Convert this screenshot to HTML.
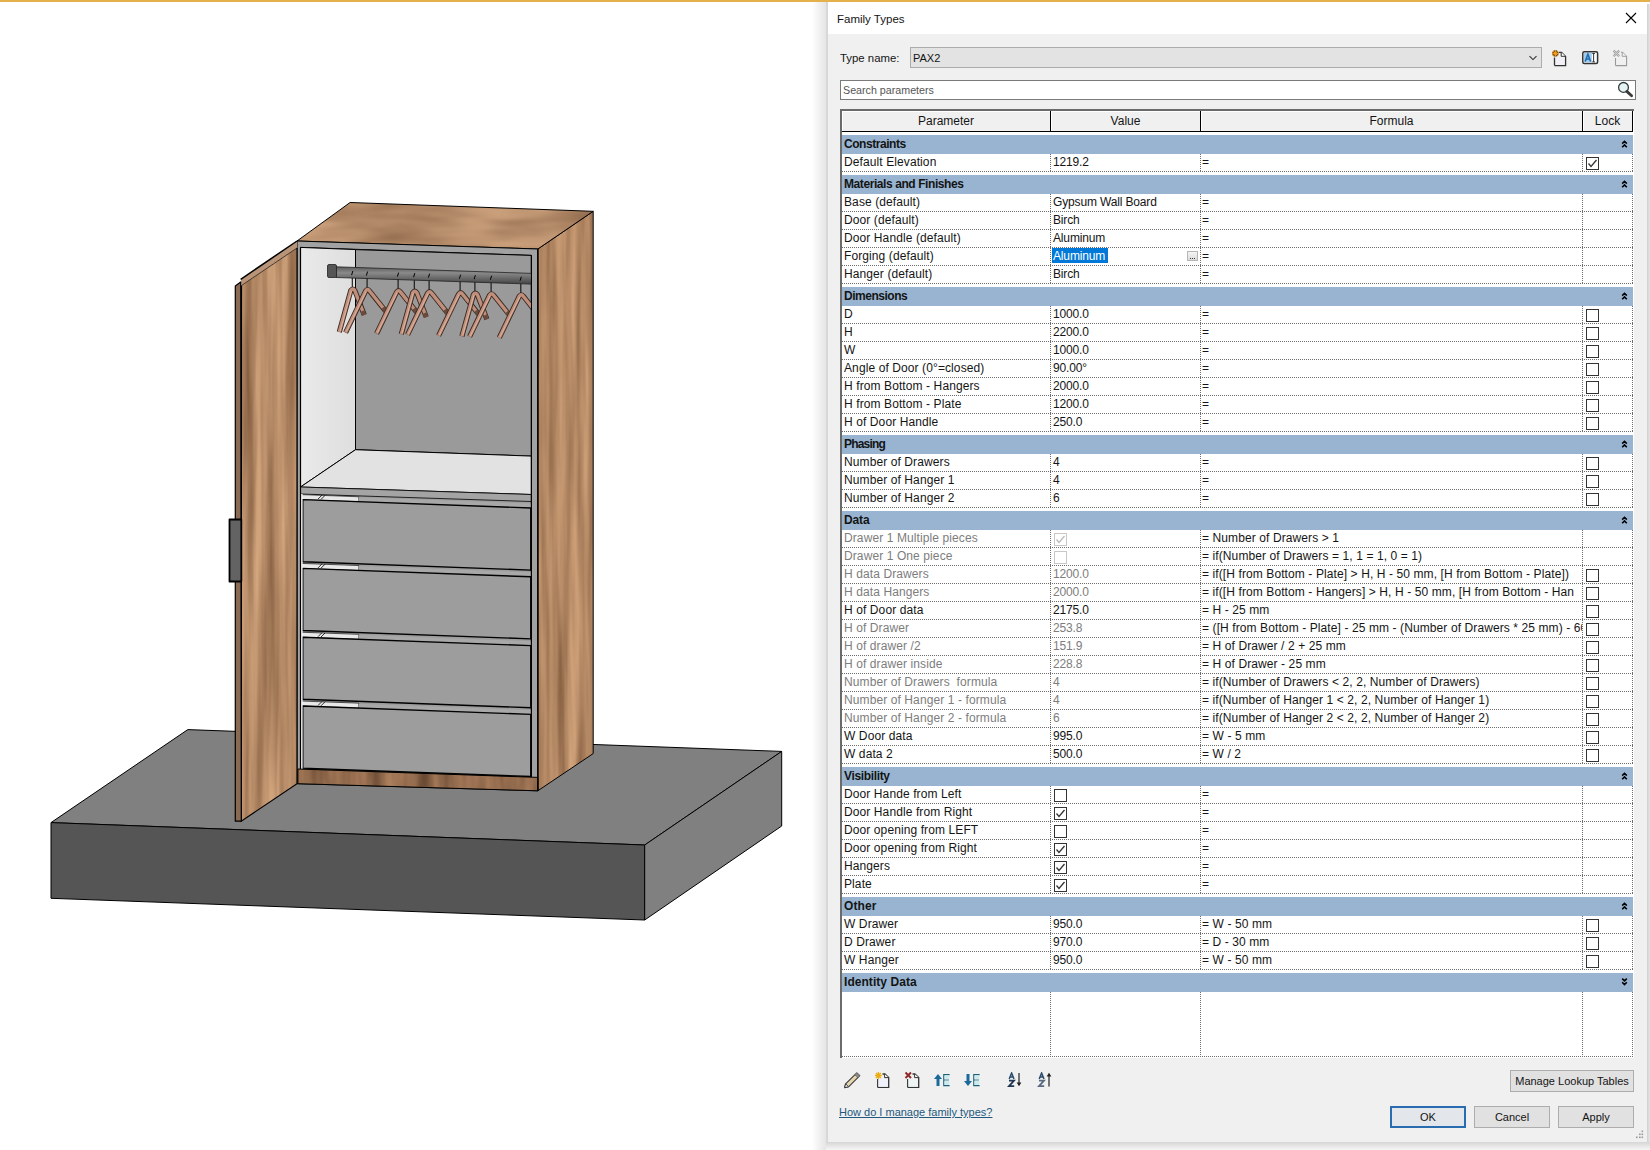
<!DOCTYPE html>
<html><head><meta charset="utf-8">
<style>
html,body{margin:0;padding:0;}
body{width:1650px;height:1150px;overflow:hidden;position:relative;background:#fff;font-family:"Liberation Sans",sans-serif;font-size:12px;color:#141414;}
.abs{position:absolute;}
#topline{position:absolute;left:0;top:0;width:1650px;height:2px;background:#e3b04b;}
#scene{position:absolute;left:0;top:0;}
#dlg{position:absolute;left:827px;top:2px;width:820px;height:1140px;background:#f0f0f0;border-left:1px solid #d6d6d6;box-sizing:border-box;}
#dlgshadow{position:absolute;left:1647px;top:4px;width:3px;height:1146px;background:linear-gradient(90deg,#cfcfcf,#e6e6e6);}
#dlgshadowb{position:absolute;left:826px;top:1142px;width:824px;height:8px;background:linear-gradient(180deg,#d6d6d6,#f6f6f6);}
#title{position:absolute;left:828px;top:2px;width:819px;height:32px;background:#fff;}
.t{position:absolute;white-space:nowrap;line-height:14px;}
.combo{position:absolute;left:910px;top:47px;width:632px;height:21px;box-sizing:border-box;background:#e3e3e3;border:1px solid #acacac;}
.search{position:absolute;left:840px;top:80px;width:796px;height:20px;box-sizing:border-box;background:#fff;border:1px solid #7a7a7a;}
#gridframe{position:absolute;left:840px;top:109px;width:794px;height:949px;background:#fff;border-top:2px solid #6b6b6b;border-left:2px solid #6b6b6b;box-sizing:border-box;}
.hdr{position:absolute;top:111px;height:21px;box-sizing:border-box;background:#f0f0f0;border-bottom:1px solid #000;border-right:1px solid #000;box-shadow:inset 1px 1px 0 #fff;text-align:center;line-height:21px;font-size:12px;}
.band{position:absolute;left:842px;width:791px;height:19px;background:#98b4d1;font-weight:bold;line-height:18px;padding-left:2px;box-sizing:border-box;}
.band b{font-weight:bold;}
.chev{position:absolute;left:779px;top:4px;}
.row{position:absolute;left:842px;width:791px;height:18px;}
.row .c1,.row .c2,.row .c3,.row .c4{position:absolute;top:0;height:17px;line-height:16px;white-space:nowrap;overflow:hidden;}
.row::after{content:"";position:absolute;left:0;top:17px;width:791px;height:1px;background:repeating-linear-gradient(90deg,#6c6c6c 0 1px,transparent 1px 2px);}
.row .c1{left:0;width:208px;padding-left:2px;box-sizing:border-box;letter-spacing:0.1px;}
.row .c2{left:208px;width:150px;padding-left:3px;box-sizing:border-box;letter-spacing:-0.15px;}
.row .c3{left:358px;width:382px;padding-left:2px;box-sizing:border-box;letter-spacing:0.1px;}
.row .c4{left:740px;width:50px;}
.row i{position:absolute;top:0;width:1px;height:17px;background:repeating-linear-gradient(180deg,#6c6c6c 0 1px,transparent 1px 2px);}
.row .v1{left:208px;}.row .v2{left:358px;}.row .v3{left:740px;}.row .v4{left:790px;}
.row.empty i{height:calc(100% - 1px);}
.row.empty::after{top:auto;bottom:0;}
.gray .c1,.gray .c2{color:#7d7d7d;}
.cb{position:absolute;left:4px;top:3px;width:13px;height:13px;}
.cb.lk{left:4px;}
.sel{position:absolute;left:2px;top:0px;height:15px;line-height:16px;background:#0078d7;color:#fff;padding:0 3px 0 1px;}
.dots3{position:absolute;left:137px;top:3px;width:11px;height:10px;box-sizing:border-box;border:1px solid #b5b5b5;background:linear-gradient(#f4f4f4,#dcdcdc);}
.dots3::after{content:"";position:absolute;left:2px;top:6px;width:6px;height:1px;background:repeating-linear-gradient(90deg,#333 0 1px,transparent 1px 2px);}
.btn{position:absolute;box-sizing:border-box;background:#e1e1e1;border:1px solid #adadad;text-align:center;font-size:11px;}
</style></head><body>
<div id="topline"></div>
<svg id="scene" width="826" height="1150" viewBox="0 0 826 1150"><defs><clipPath id="intClip"><polygon points="300.5,247.4 531,255.4 531,777 300.5,769"/></clipPath><filter id="fR" x="0%" y="0%" width="100%" height="100%" color-interpolation-filters="sRGB"><feTurbulence type="fractalNoise" baseFrequency="0.09 0.004" numOctaves="3" seed="5" result="n"/><feColorMatrix in="n" type="matrix" values="0.471 0 0 0 0.463  0.424 0 0 0 0.318  0.361 0 0 0 0.208  0 0 0 0 1" result="c"/><feComposite in="c" in2="SourceAlpha" operator="in"/></filter><filter id="fD" x="0%" y="0%" width="100%" height="100%" color-interpolation-filters="sRGB"><feTurbulence type="fractalNoise" baseFrequency="0.09 0.004" numOctaves="3" seed="9" result="n"/><feColorMatrix in="n" type="matrix" values="0.471 0 0 0 0.471  0.431 0 0 0 0.324  0.369 0 0 0 0.214  0 0 0 0 1" result="c"/><feComposite in="c" in2="SourceAlpha" operator="in"/></filter><filter id="fT" x="0%" y="0%" width="100%" height="100%" color-interpolation-filters="sRGB"><feTurbulence type="fractalNoise" baseFrequency="0.008 0.04" numOctaves="3" seed="13" result="n"/><feColorMatrix in="n" type="matrix" values="0.471 0 0 0 0.463  0.431 0 0 0 0.324  0.376 0 0 0 0.220  0 0 0 0 1" result="c"/><feComposite in="c" in2="SourceAlpha" operator="in"/></filter><filter id="fP" x="0%" y="0%" width="100%" height="100%" color-interpolation-filters="sRGB"><feTurbulence type="fractalNoise" baseFrequency="0.06 0.01" numOctaves="3" seed="21" result="n"/><feColorMatrix in="n" type="matrix" values="0.431 0 0 0 0.363  0.353 0 0 0 0.245  0.275 0 0 0 0.167  0 0 0 0 1" result="c"/><feComposite in="c" in2="SourceAlpha" operator="in"/></filter><linearGradient id="woodR" gradientUnits="userSpaceOnUse" x1="537" y1="0" x2="594" y2="0"><stop offset="0.000" stop-color="rgb(165,121,83)"/><stop offset="0.038" stop-color="rgb(193,145,103)"/><stop offset="0.077" stop-color="rgb(190,142,101)"/><stop offset="0.115" stop-color="rgb(170,125,87)"/><stop offset="0.154" stop-color="rgb(179,133,93)"/><stop offset="0.192" stop-color="rgb(177,132,92)"/><stop offset="0.231" stop-color="rgb(186,139,98)"/><stop offset="0.269" stop-color="rgb(191,143,102)"/><stop offset="0.308" stop-color="rgb(163,120,82)"/><stop offset="0.346" stop-color="rgb(161,117,80)"/><stop offset="0.385" stop-color="rgb(193,145,103)"/><stop offset="0.423" stop-color="rgb(177,131,92)"/><stop offset="0.462" stop-color="rgb(190,142,101)"/><stop offset="0.500" stop-color="rgb(160,117,80)"/><stop offset="0.538" stop-color="rgb(177,132,92)"/><stop offset="0.577" stop-color="rgb(188,141,100)"/><stop offset="0.615" stop-color="rgb(169,124,86)"/><stop offset="0.654" stop-color="rgb(197,149,106)"/><stop offset="0.692" stop-color="rgb(196,147,105)"/><stop offset="0.731" stop-color="rgb(161,118,80)"/><stop offset="0.769" stop-color="rgb(161,117,80)"/><stop offset="0.808" stop-color="rgb(181,135,95)"/><stop offset="0.846" stop-color="rgb(197,148,106)"/><stop offset="0.885" stop-color="rgb(175,129,90)"/><stop offset="0.923" stop-color="rgb(168,124,86)"/><stop offset="0.962" stop-color="rgb(176,131,91)"/><stop offset="1.000" stop-color="rgb(161,117,80)"/></linearGradient><linearGradient id="woodD" gradientUnits="userSpaceOnUse" x1="241" y1="0" x2="297" y2="0"><stop offset="0.000" stop-color="rgb(204,153,110)"/><stop offset="0.038" stop-color="rgb(203,153,110)"/><stop offset="0.077" stop-color="rgb(168,122,85)"/><stop offset="0.115" stop-color="rgb(169,123,86)"/><stop offset="0.154" stop-color="rgb(199,149,107)"/><stop offset="0.192" stop-color="rgb(195,146,104)"/><stop offset="0.231" stop-color="rgb(192,143,102)"/><stop offset="0.269" stop-color="rgb(178,131,92)"/><stop offset="0.308" stop-color="rgb(190,141,100)"/><stop offset="0.346" stop-color="rgb(190,141,100)"/><stop offset="0.385" stop-color="rgb(189,140,100)"/><stop offset="0.423" stop-color="rgb(172,126,88)"/><stop offset="0.462" stop-color="rgb(183,135,96)"/><stop offset="0.500" stop-color="rgb(181,134,95)"/><stop offset="0.538" stop-color="rgb(194,145,104)"/><stop offset="0.577" stop-color="rgb(205,154,111)"/><stop offset="0.615" stop-color="rgb(203,153,110)"/><stop offset="0.654" stop-color="rgb(187,139,99)"/><stop offset="0.692" stop-color="rgb(183,136,96)"/><stop offset="0.731" stop-color="rgb(176,130,91)"/><stop offset="0.769" stop-color="rgb(167,122,85)"/><stop offset="0.808" stop-color="rgb(167,121,84)"/><stop offset="0.846" stop-color="rgb(184,136,97)"/><stop offset="0.885" stop-color="rgb(178,131,92)"/><stop offset="0.923" stop-color="rgb(181,133,94)"/><stop offset="0.962" stop-color="rgb(201,151,108)"/><stop offset="1.000" stop-color="rgb(187,138,98)"/></linearGradient><linearGradient id="woodP" gradientUnits="userSpaceOnUse" x1="297" y1="0" x2="538" y2="0"><stop offset="0.000" stop-color="rgb(142,105,74)"/><stop offset="0.038" stop-color="rgb(151,113,80)"/><stop offset="0.077" stop-color="rgb(146,108,77)"/><stop offset="0.115" stop-color="rgb(152,114,82)"/><stop offset="0.154" stop-color="rgb(153,114,82)"/><stop offset="0.192" stop-color="rgb(137,101,71)"/><stop offset="0.231" stop-color="rgb(136,100,70)"/><stop offset="0.269" stop-color="rgb(159,120,86)"/><stop offset="0.308" stop-color="rgb(143,106,75)"/><stop offset="0.346" stop-color="rgb(142,105,74)"/><stop offset="0.385" stop-color="rgb(163,123,89)"/><stop offset="0.423" stop-color="rgb(149,111,79)"/><stop offset="0.462" stop-color="rgb(159,120,86)"/><stop offset="0.500" stop-color="rgb(149,111,79)"/><stop offset="0.538" stop-color="rgb(153,115,82)"/><stop offset="0.577" stop-color="rgb(140,103,73)"/><stop offset="0.615" stop-color="rgb(153,115,82)"/><stop offset="0.654" stop-color="rgb(160,120,87)"/><stop offset="0.692" stop-color="rgb(150,112,80)"/><stop offset="0.731" stop-color="rgb(156,117,84)"/><stop offset="0.769" stop-color="rgb(154,116,83)"/><stop offset="0.808" stop-color="rgb(137,101,71)"/><stop offset="0.846" stop-color="rgb(157,118,85)"/><stop offset="0.885" stop-color="rgb(152,114,81)"/><stop offset="0.923" stop-color="rgb(144,107,76)"/><stop offset="0.962" stop-color="rgb(136,100,70)"/><stop offset="1.000" stop-color="rgb(160,120,87)"/></linearGradient><linearGradient id="topG" x1="0" y1="0" x2="1" y2="0.3"><stop offset="0" stop-color="#b4845e"/><stop offset="0.3" stop-color="#c09470"/><stop offset="0.55" stop-color="#a97b56"/><stop offset="0.8" stop-color="#bb8e68"/><stop offset="1" stop-color="#ae8360"/></linearGradient><linearGradient id="leftIn" x1="0" y1="0" x2="1" y2="0"><stop offset="0" stop-color="#eaeaea"/><stop offset="1" stop-color="#dedede"/></linearGradient><linearGradient id="rodG" x1="0" y1="0" x2="0" y2="1"><stop offset="0" stop-color="#5a5a5a"/><stop offset="0.35" stop-color="#8a8a8a"/><stop offset="1" stop-color="#444"/></linearGradient></defs><polygon points="51,822.6 187.8,729.6 781.7,751.4 644.7,845" fill="#808080" stroke="#000" stroke-width="1" stroke-linejoin="round" />
<polygon points="51,822.6 644.7,845 644.7,920 51,898.3" fill="#555555" stroke="#000" stroke-width="1" stroke-linejoin="round" />
<polygon points="644.7,845 781.7,751.4 781.7,826 644.7,920" fill="#808080" stroke="#000" stroke-width="1" stroke-linejoin="round" />
<polygon points="537.8,249 593.2,211.3 593.2,753.6 537.8,790.8" fill="#000" stroke="none" stroke-width="1" stroke-linejoin="round" filter="url(#fR)"/>
<polygon points="537.8,249 593.2,211.3 593.2,753.6 537.8,790.8" fill="none" stroke="#000" stroke-width="1" stroke-linejoin="round" />
<polygon points="297,241 350.1,202.5 593.2,211.3 537.8,249" fill="#000" stroke="none" stroke-width="1" stroke-linejoin="round" filter="url(#fT)"/>
<polygon points="297,241 350.1,202.5 593.2,211.3 537.8,249" fill="none" stroke="#000" stroke-width="1" stroke-linejoin="round" />
<polygon points="297,241 537.8,249 537.8,790.8 297,783.7" fill="#a2a2a2" stroke="#000" stroke-width="1" stroke-linejoin="round" />
<polygon points="300.5,247.4 531.4,255.4 531.4,777 300.5,769" fill="#9c9c9c" stroke="#000" stroke-width="1" stroke-linejoin="round" />
<polygon points="300.5,247.4 355.5,249.6 355.5,449.7 300.5,487" fill="url(#leftIn)" stroke="#000" stroke-width="1" stroke-linejoin="round" />
<polygon points="355.5,249.6 531.4,255.4 531.4,456.1 355.5,449.7" fill="#9a9a9a" stroke="#000" stroke-width="1" stroke-linejoin="round" />
<polygon points="300.5,487 355.5,449.7 531.4,456.1 531.4,494.5" fill="#e2e2e2" stroke="#000" stroke-width="1" stroke-linejoin="round" />
<polygon points="300.5,487 531.4,494.5 531.4,501.5 300.5,494" fill="#a4a4a4" stroke="#000" stroke-width="0.8" stroke-linejoin="round" />
<polygon points="300.8,494.6 358.8,496.7663157894737 358.8,501.7663157894737 300.8,499.6" fill="#e8e8e8" stroke="#000" stroke-width="0.6" stroke-linejoin="round" />
<polygon points="358.8,497.2663157894737 531,503.5736842105263 531,508.0736842105263 358.8,501.7663157894737" fill="#a8a8a8" stroke="none" stroke-width="1" stroke-linejoin="round" />
<polygon points="302.8,499.6 530.8,508.0 530.8,570.1 302.8,561.7" fill="#9d9d9d" stroke="#000" stroke-width="1.4" stroke-linejoin="round" />
<path d="M318 499.1 l4 -4 M321 499.40000000000003 l4 -4" stroke="#000" stroke-width="0.8"/>
<polygon points="300.8,563.4 358.8,565.5663157894736 358.8,570.5663157894736 300.8,568.4" fill="#e8e8e8" stroke="#000" stroke-width="0.6" stroke-linejoin="round" />
<polygon points="358.8,566.0663157894736 531,572.3736842105262 531,576.8736842105262 358.8,570.5663157894736" fill="#a8a8a8" stroke="none" stroke-width="1" stroke-linejoin="round" />
<polygon points="302.8,568.4 530.8,576.8 530.8,638.9 302.8,630.5" fill="#9d9d9d" stroke="#000" stroke-width="1.4" stroke-linejoin="round" />
<path d="M318 567.9 l4 -4 M321 568.1999999999999 l4 -4" stroke="#000" stroke-width="0.8"/>
<polygon points="300.8,632.2 358.8,634.3663157894737 358.8,639.3663157894737 300.8,637.2" fill="#e8e8e8" stroke="#000" stroke-width="0.6" stroke-linejoin="round" />
<polygon points="358.8,634.8663157894737 531,641.1736842105263 531,645.6736842105263 358.8,639.3663157894737" fill="#a8a8a8" stroke="none" stroke-width="1" stroke-linejoin="round" />
<polygon points="302.8,637.2 530.8,645.6 530.8,707.7 302.8,699.3000000000001" fill="#9d9d9d" stroke="#000" stroke-width="1.4" stroke-linejoin="round" />
<path d="M318 636.7 l4 -4 M321 637.0 l4 -4" stroke="#000" stroke-width="0.8"/>
<polygon points="300.8,701.0 358.8,703.1663157894736 358.8,708.1663157894736 300.8,706.0" fill="#e8e8e8" stroke="#000" stroke-width="0.6" stroke-linejoin="round" />
<polygon points="358.8,703.6663157894736 531,709.9736842105262 531,714.4736842105262 358.8,708.1663157894736" fill="#a8a8a8" stroke="none" stroke-width="1" stroke-linejoin="round" />
<polygon points="302.8,706.0 530.8,714.4 530.8,776.5 302.8,768.1" fill="#9d9d9d" stroke="#000" stroke-width="1.4" stroke-linejoin="round" />
<path d="M318 705.5 l4 -4 M321 705.8 l4 -4" stroke="#000" stroke-width="0.8"/>
<rect x="300.8" y="494" width="1.8" height="275" fill="#f2f2f2"/>
<polygon points="297.9,769 537.8,777.4 537.8,790.8 297.9,783.7" fill="#000" stroke="none" stroke-width="1" stroke-linejoin="round" filter="url(#fP)"/>
<polygon points="297.9,769 537.8,777.4 537.8,790.8 297.9,783.7" fill="none" stroke="#000" stroke-width="1" stroke-linejoin="round" />
<line x1="531.4" y1="255.4" x2="531.4" y2="777" stroke="#000" stroke-width="1.2"/>
<line x1="300.5" y1="247.4" x2="300.5" y2="769" stroke="#000" stroke-width="1.2"/>
<g clip-path="url(#intClip)">
<polygon points="336,266.8 531.4,273.4 531.4,284.09999999999997 336,277.5" fill="url(#rodG)" stroke="#222" stroke-width="0.8"/>
<rect x="327.5" y="264.5" width="9" height="13" rx="1.5" fill="#555" stroke="#222" stroke-width="0.8"/>
<path d="M352.8 271.0505629477994 l-1.2 4" stroke="#000" stroke-width="1"/>
<path d="M352.3 278.0505629477994 L352.3 288.0505629477994" stroke="#111" stroke-width="1.1"/>
<path d="M339.3 332.0505629477994 L350.8 290.5505629477994 Q352.8 287.5505629477994 354.8 290.5505629477994 L364.3 315.0505629477994" fill="none" stroke="#3b2a22" stroke-width="5.2" stroke-linejoin="round" stroke-linecap="butt"/>
<path d="M339.3 332.0505629477994 L350.8 290.5505629477994 Q352.8 287.5505629477994 354.8 290.5505629477994 L364.3 315.0505629477994" fill="none" stroke="#bf8f7c" stroke-width="3.4" stroke-linejoin="round" stroke-linecap="butt"/>
<path d="M340.1 331.0505629477994 L351.3 291.0505629477994" fill="none" stroke="#e2b8a4" stroke-width="0.9"/>
<path d="M362.5 311.0005629477994 L364.3 315.0505629477994" stroke="#6a4a3c" stroke-width="4"/>
<path d="M367.6 271.55046059365407 l-1.2 4" stroke="#000" stroke-width="1"/>
<path d="M367.1 278.55046059365407 L367.1 288.55046059365407" stroke="#111" stroke-width="1.1"/>
<path d="M345.6 332.55046059365407 L365.6 291.05046059365407 Q367.6 288.05046059365407 369.6 291.05046059365407 L385.6 311.05046059365407" fill="none" stroke="#3b2a22" stroke-width="5.2" stroke-linejoin="round" stroke-linecap="butt"/>
<path d="M345.6 332.55046059365407 L365.6 291.05046059365407 Q367.6 288.05046059365407 369.6 291.05046059365407 L385.6 311.05046059365407" fill="none" stroke="#bf8f7c" stroke-width="3.4" stroke-linejoin="round" stroke-linecap="butt"/>
<path d="M346.40000000000003 331.55046059365407 L366.1 291.55046059365407" fill="none" stroke="#e2b8a4" stroke-width="0.9"/>
<path d="M382.82500000000005 307.67546059365407 L385.6 311.05046059365407" stroke="#6a4a3c" stroke-width="4"/>
<path d="M398.6 272.59754350051173 l-1.2 4" stroke="#000" stroke-width="1"/>
<path d="M398.1 279.59754350051173 L398.1 289.59754350051173" stroke="#111" stroke-width="1.1"/>
<path d="M376.6 333.59754350051173 L396.6 292.09754350051173 Q398.6 289.09754350051173 400.6 292.09754350051173 L416.6 312.09754350051173" fill="none" stroke="#3b2a22" stroke-width="5.2" stroke-linejoin="round" stroke-linecap="butt"/>
<path d="M376.6 333.59754350051173 L396.6 292.09754350051173 Q398.6 289.09754350051173 400.6 292.09754350051173 L416.6 312.09754350051173" fill="none" stroke="#bf8f7c" stroke-width="3.4" stroke-linejoin="round" stroke-linecap="butt"/>
<path d="M377.40000000000003 332.59754350051173 L397.1 292.59754350051173" fill="none" stroke="#e2b8a4" stroke-width="0.9"/>
<path d="M413.82500000000005 308.72254350051173 L416.6 312.09754350051173" stroke="#6a4a3c" stroke-width="4"/>
<path d="M414.8 273.14472876151484 l-1.2 4" stroke="#000" stroke-width="1"/>
<path d="M414.3 280.14472876151484 L414.3 290.14472876151484" stroke="#111" stroke-width="1.1"/>
<path d="M401.3 334.14472876151484 L412.8 292.64472876151484 Q414.8 289.64472876151484 416.8 292.64472876151484 L426.3 317.14472876151484" fill="none" stroke="#3b2a22" stroke-width="5.2" stroke-linejoin="round" stroke-linecap="butt"/>
<path d="M401.3 334.14472876151484 L412.8 292.64472876151484 Q414.8 289.64472876151484 416.8 292.64472876151484 L426.3 317.14472876151484" fill="none" stroke="#bf8f7c" stroke-width="3.4" stroke-linejoin="round" stroke-linecap="butt"/>
<path d="M402.1 333.14472876151484 L413.3 293.14472876151484" fill="none" stroke="#e2b8a4" stroke-width="0.9"/>
<path d="M424.5 313.09472876151483 L426.3 317.14472876151484" stroke="#6a4a3c" stroke-width="4"/>
<path d="M429.6 273.64462640736946 l-1.2 4" stroke="#000" stroke-width="1"/>
<path d="M429.1 280.64462640736946 L429.1 290.64462640736946" stroke="#111" stroke-width="1.1"/>
<path d="M407.6 334.64462640736946 L427.6 293.14462640736946 Q429.6 290.14462640736946 431.6 293.14462640736946 L447.6 313.14462640736946" fill="none" stroke="#3b2a22" stroke-width="5.2" stroke-linejoin="round" stroke-linecap="butt"/>
<path d="M407.6 334.64462640736946 L427.6 293.14462640736946 Q429.6 290.14462640736946 431.6 293.14462640736946 L447.6 313.14462640736946" fill="none" stroke="#bf8f7c" stroke-width="3.4" stroke-linejoin="round" stroke-linecap="butt"/>
<path d="M408.40000000000003 333.64462640736946 L428.1 293.64462640736946" fill="none" stroke="#e2b8a4" stroke-width="0.9"/>
<path d="M444.82500000000005 309.76962640736946 L447.6 313.14462640736946" stroke="#6a4a3c" stroke-width="4"/>
<path d="M460.6 274.6917093142272 l-1.2 4" stroke="#000" stroke-width="1"/>
<path d="M460.1 281.6917093142272 L460.1 291.6917093142272" stroke="#111" stroke-width="1.1"/>
<path d="M438.6 335.6917093142272 L458.6 294.1917093142272 Q460.6 291.1917093142272 462.6 294.1917093142272 L478.6 314.1917093142272" fill="none" stroke="#3b2a22" stroke-width="5.2" stroke-linejoin="round" stroke-linecap="butt"/>
<path d="M438.6 335.6917093142272 L458.6 294.1917093142272 Q460.6 291.1917093142272 462.6 294.1917093142272 L478.6 314.1917093142272" fill="none" stroke="#bf8f7c" stroke-width="3.4" stroke-linejoin="round" stroke-linecap="butt"/>
<path d="M439.40000000000003 334.6917093142272 L459.1 294.6917093142272" fill="none" stroke="#e2b8a4" stroke-width="0.9"/>
<path d="M475.82500000000005 310.8167093142272 L478.6 314.1917093142272" stroke="#6a4a3c" stroke-width="4"/>
<path d="M475.4 275.19160696008186 l-1.2 4" stroke="#000" stroke-width="1"/>
<path d="M474.9 282.19160696008186 L474.9 292.19160696008186" stroke="#111" stroke-width="1.1"/>
<path d="M461.9 336.19160696008186 L473.4 294.69160696008186 Q475.4 291.69160696008186 477.4 294.69160696008186 L486.9 319.19160696008186" fill="none" stroke="#3b2a22" stroke-width="5.2" stroke-linejoin="round" stroke-linecap="butt"/>
<path d="M461.9 336.19160696008186 L473.4 294.69160696008186 Q475.4 291.69160696008186 477.4 294.69160696008186 L486.9 319.19160696008186" fill="none" stroke="#bf8f7c" stroke-width="3.4" stroke-linejoin="round" stroke-linecap="butt"/>
<path d="M462.7 335.19160696008186 L473.9 295.19160696008186" fill="none" stroke="#e2b8a4" stroke-width="0.9"/>
<path d="M485.09999999999997 315.14160696008184 L486.9 319.19160696008186" stroke="#6a4a3c" stroke-width="4"/>
<path d="M491.6 275.7387922210849 l-1.2 4" stroke="#000" stroke-width="1"/>
<path d="M491.1 282.7387922210849 L491.1 292.7387922210849" stroke="#111" stroke-width="1.1"/>
<path d="M469.6 336.7387922210849 L489.6 295.2387922210849 Q491.6 292.2387922210849 493.6 295.2387922210849 L509.6 315.2387922210849" fill="none" stroke="#3b2a22" stroke-width="5.2" stroke-linejoin="round" stroke-linecap="butt"/>
<path d="M469.6 336.7387922210849 L489.6 295.2387922210849 Q491.6 292.2387922210849 493.6 295.2387922210849 L509.6 315.2387922210849" fill="none" stroke="#bf8f7c" stroke-width="3.4" stroke-linejoin="round" stroke-linecap="butt"/>
<path d="M470.40000000000003 335.7387922210849 L490.1 295.7387922210849" fill="none" stroke="#e2b8a4" stroke-width="0.9"/>
<path d="M506.82500000000005 311.8637922210849 L509.6 315.2387922210849" stroke="#6a4a3c" stroke-width="4"/>
<path d="M521.3 276.74196519959054 l-1.2 4" stroke="#000" stroke-width="1"/>
<path d="M520.8 283.74196519959054 L520.8 293.74196519959054" stroke="#111" stroke-width="1.1"/>
<path d="M499.29999999999995 337.74196519959054 L519.3 296.24196519959054 Q521.3 293.24196519959054 523.3 296.24196519959054 L539.3 316.24196519959054" fill="none" stroke="#3b2a22" stroke-width="5.2" stroke-linejoin="round" stroke-linecap="butt"/>
<path d="M499.29999999999995 337.74196519959054 L519.3 296.24196519959054 Q521.3 293.24196519959054 523.3 296.24196519959054 L539.3 316.24196519959054" fill="none" stroke="#bf8f7c" stroke-width="3.4" stroke-linejoin="round" stroke-linecap="butt"/>
<path d="M500.09999999999997 336.74196519959054 L519.8 296.74196519959054" fill="none" stroke="#e2b8a4" stroke-width="0.9"/>
<path d="M536.525 312.86696519959054 L539.3 316.24196519959054" stroke="#6a4a3c" stroke-width="4"/>
</g>
<line x1="537.8" y1="249" x2="537.8" y2="790.8" stroke="#000" stroke-width="1.2"/>
<polygon points="240.7,279.3 297,241 297,248 241.5,285.5" fill="#b89478" stroke="none" stroke-width="1" stroke-linejoin="round" />
<path d="M240.7 279.3 L297 241" stroke="#000" stroke-width="1.5"/>
<polygon points="241.5,285.5 297,248 297,783.7 241.3,821.2" fill="#000" stroke="none" stroke-width="1" stroke-linejoin="round" filter="url(#fD)"/>
<path d="M241.5 285.5 L297 248" stroke="#2a1a10" stroke-width="0.8"/>
<path d="M297 248 L297 783.7 L241.3 821.2 L241.5 285.5" fill="none" stroke="#000" stroke-width="1.2"/>
<polygon points="235.3,286 240.7,282 241.3,821.2 235.3,821.2" fill="#8a6a52" stroke="#000" stroke-width="1.2" stroke-linejoin="round" />
<polygon points="229.5,519.5 241.3,519.5 241.3,581.5 229.5,581.5" fill="#636363" stroke="#000" stroke-width="1.8" stroke-linejoin="round" /></svg>
<div id="dlgshadow"></div><div id="dlgshadowl" style="position:absolute;left:812px;top:2px;width:15px;height:1148px;background:linear-gradient(90deg,rgba(232,232,232,0),#e6e6e6 90%,#d2d2d2);"></div>
<div id="dlgshadowb"></div>
<div id="dlg"></div>
<div id="title"></div>
<div class="t" style="left:837px;top:12px;font-size:11.5px;">Family Types</div>
<svg class="abs" style="left:1624px;top:11px" width="14" height="14" viewBox="0 0 14 14"><path d="M2 2 L12 12 M12 2 L2 12" stroke="#000" stroke-width="1.1"/></svg>
<div class="t" style="left:840px;top:51px;font-size:11.4px;">Type name:</div>
<div class="combo"><span class="t" style="left:2px;top:3px;font-size:11px;">PAX2</span>
<svg class="abs" style="left:617px;top:7px" width="10" height="6" viewBox="0 0 10 6"><path d="M1.5 1.2 L5 4.6 L8.5 1.2" fill="none" stroke="#333" stroke-width="1.1"/></svg></div>
<div class="search"><span class="t" style="left:2px;top:2px;font-size:10.7px;color:#555;">Search parameters</span></div>

<!-- top icons -->
<svg class="abs" style="left:1550px;top:48px" width="20" height="20" viewBox="0 0 20 20">
<rect x="4.9" y="9.2" width="10.2" height="8" fill="#f2f0f6"/>
<path d="M4.5 17.6 V9.5 M4.5 17.6 H15.6 V8.5 L11.5 4.3 H9" fill="none" stroke="#333" stroke-width="1.3"/>
<path d="M11.2 4.3 V8.3 H15.4" fill="#fff" stroke="#333" stroke-width="1"/>
<g stroke="#7a4a10" stroke-width="2.2"><path d="M5.4 2.2 V8.6 M2.2 5.4 H8.6 M3.1 3.1 L7.7 7.7 M7.7 3.1 L3.1 7.7"/></g>
<g stroke="#f0a020" stroke-width="1"><path d="M5.4 2.2 V8.6 M2.2 5.4 H8.6 M3.1 3.1 L7.7 7.7 M7.7 3.1 L3.1 7.7"/></g>
</svg>
<svg class="abs" style="left:1581px;top:50px" width="18" height="15" viewBox="0 0 18 15">
<rect x="1.8" y="1.8" width="14.8" height="11.7" rx="1.5" fill="#fff" stroke="#333" stroke-width="1.5"/>
<rect x="3" y="3" width="7.8" height="9.2" fill="#9fcbef"/>
<path d="M4.2 11.5 L6.9 4.2 L9.6 11.5 M5.1 9 H8.7" fill="none" stroke="#1d6bab" stroke-width="1.5"/>
<path d="M12.6 3.5 V11.8 M11.3 3.5 H13.9 M11.3 11.8 H13.9" fill="none" stroke="#333" stroke-width="1"/>
</svg>
<svg class="abs" style="left:1611px;top:48px" width="20" height="20" viewBox="0 0 20 20">
<path d="M4.5 17.6 V10 M4.5 17.6 H15.6 V8.5 L11.5 4.3 H10" fill="none" stroke="#9a9a9a" stroke-width="1.1"/>
<path d="M11.2 4.3 V8.3 H15.4" fill="#f4f4f4" stroke="#9a9a9a" stroke-width="0.9"/>
<g stroke="#a0a0a0" stroke-width="2.2"><path d="M2.6 2.6 L8.2 8.2 M8.2 2.6 L2.6 8.2"/></g>
<g stroke="#e6e6e6" stroke-width="0.7"><path d="M2.6 2.6 L8.2 8.2 M8.2 2.6 L2.6 8.2"/></g>
</svg>
<svg class="abs" style="left:1615px;top:80px" width="20" height="19" viewBox="0 0 20 19">
<circle cx="8.5" cy="7.4" r="4.9" fill="#e6f3f3" stroke="#2f3b3b" stroke-width="1.3"/>
<path d="M11.8 11.4 L16.6 15.8" stroke="#3a3a3a" stroke-width="2.8" stroke-linecap="round"/>
</svg>
<!-- bottom toolbar -->
<svg class="abs" style="left:842px;top:1071px" width="20" height="19" viewBox="0 0 20 19">
<path d="M2.6 16.6 L3.6 12.8 L14.8 1.8 L17.8 4.6 L6.6 15.8 Z" fill="#e4d5ad" stroke="#3a3a3a" stroke-width="1.1" stroke-linejoin="round"/>
<path d="M2.6 16.6 L3.6 12.8 L6.6 15.8 Z" fill="#fff" stroke="#3a3a3a" stroke-width="1"/>
<path d="M13 3.6 L16 6.4" stroke="#3a3a3a" stroke-width="1"/>
<path d="M14.8 1.8 L17.8 4.6 L16 6.4 L13 3.6 Z" fill="#8a8a8a"/>
</svg>
<svg class="abs" style="left:874px;top:1071px" width="18" height="19" viewBox="0 0 18 19">
<path d="M3.7 16.4 V8 M3.7 16.4 H14.7 V6.5 L10.9 3 H8.5" fill="none" stroke="#333" stroke-width="1.3"/>
<path d="M10.6 3 V6.6 H14.6" fill="#fff" stroke="#333" stroke-width="1"/>
<rect x="4.4" y="8" width="9.6" height="7.8" fill="#eef0fa"/>
<g stroke="#ecac10" stroke-width="1.3"><path d="M4.4 1 V8 M1 4.5 H7.8 M2 2 L6.8 7 M6.8 2 L2 7"/></g>
</svg>
<svg class="abs" style="left:904px;top:1071px" width="18" height="19" viewBox="0 0 18 19">
<path d="M3.7 16.4 V8 M3.7 16.4 H14.7 V6.5 L10.9 3 H8.5" fill="none" stroke="#333" stroke-width="1.3"/>
<path d="M10.6 3 V6.6 H14.6" fill="#fff" stroke="#333" stroke-width="1"/>
<rect x="4.4" y="8" width="9.6" height="7.8" fill="#eef3f3"/>
<g stroke="#8e2a2a" stroke-width="2"><path d="M1.5 1.5 L7 7 M7 1.5 L1.5 7"/></g>
</svg>
<svg class="abs" style="left:932px;top:1072px" width="20" height="16" viewBox="0 0 20 16">
<path d="M6 2 L10 7 H7.5 V14 H4.5 V7 H2 Z" fill="#1a6a9a"/>
<path d="M17.6 2.6 H11.8 V13.6 H17.6 M11.8 8 H17" fill="none" stroke="#1e5f78" stroke-width="1.2"/>
<rect x="12.5" y="3.3" width="4.6" height="4" fill="#c9ecef"/><rect x="12.5" y="8.7" width="4.6" height="4.2" fill="#c9ecef"/>
</svg>
<svg class="abs" style="left:962px;top:1072px" width="20" height="16" viewBox="0 0 20 16">
<path d="M6 14 L10 9 H7.5 V2 H4.5 V9 H2 Z" fill="#1a6a9a"/>
<path d="M17.6 2.6 H11.8 V13.6 H17.6 M11.8 8 H17" fill="none" stroke="#1e5f78" stroke-width="1.2"/>
<rect x="12.5" y="3.3" width="4.6" height="4" fill="#c9ecef"/><rect x="12.5" y="8.7" width="4.6" height="4.2" fill="#c9ecef"/>
</svg>
<svg class="abs" style="left:1007px;top:1072px" width="18" height="16" viewBox="0 0 18 16">
<path d="M2.2 7 L4.6 1 L7 7 M3.1 5 H6.1" fill="none" stroke="#2a4a6a" stroke-width="1.5"/>
<path d="M2 8.6 H7 L2 14.2 H7.2" fill="none" stroke="#1f3550" stroke-width="1.8"/>
<path d="M12 1 V13" stroke="#222" stroke-width="1.2"/><path d="M9.6 10.5 L12 14.3 L14.4 10.5 Z" fill="#222"/>
</svg>
<svg class="abs" style="left:1037px;top:1072px" width="18" height="16" viewBox="0 0 18 16">
<path d="M2.2 7 L4.6 1 L7 7 M3.1 5 H6.1" fill="none" stroke="#2a4a6a" stroke-width="1.5"/>
<path d="M2 8.6 H7 L2 14.2 H7.2" fill="none" stroke="#5a6a80" stroke-width="1.8"/>
<path d="M12 3 V14.5" stroke="#222" stroke-width="1.2"/><path d="M9.6 4.6 L12 0.8 L14.4 4.6 Z" fill="#222"/>
</svg>
<!-- resize grip -->
<svg class="abs" style="left:1634px;top:1129px" width="12" height="12" viewBox="0 0 12 12" fill="#9a9a9a">
<rect x="7.5" y="1.5" width="1.6" height="1.6"/><rect x="5" y="4.5" width="1.6" height="1.6"/><rect x="7.5" y="4.5" width="1.6" height="1.6"/>
<rect x="2" y="7.5" width="1.6" height="1.6"/><rect x="5" y="7.5" width="1.6" height="1.6"/><rect x="7.5" y="7.5" width="1.6" height="1.6"/>
</svg>
<div id="gridframe"></div>
<div class="hdr" style="left:842px;width:209px;">Parameter</div>
<div class="hdr" style="left:1051px;width:150px;">Value</div>
<div class="hdr" style="left:1201px;width:382px;">Formula</div>
<div class="hdr" style="left:1583px;width:50px;">Lock</div>
<div class="band" style="top:135px"><b style="letter-spacing:-0.45px">Constraints</b><svg width="7" height="10" viewBox="0 0 7 10" class="chev"><path d="M1.2 4.6 L3.5 2.3 L5.8 4.6 M1.2 8.2 L3.5 5.9 L5.8 8.2" fill="none" stroke="#000" stroke-width="1.6"/></svg></div>
<div class="row" style="top:154px"><div class="c1">Default Elevation</div><div class="c2">1219.2</div><div class="c3">=</div><div class="c4"><span class="cb lk"><svg width="13" height="13" viewBox="0 0 13 13" style="position:absolute;left:0;top:0"><rect x="0.5" y="0.5" width="12" height="12" fill="#fff" stroke="#333"/><path d="M2.5 6.5 L5 9.5 L10.5 3" fill="none" stroke="#333" stroke-width="1.3"/></svg></span></div><i class="v1"></i><i class="v2"></i><i class="v3"></i><i class="v4"></i></div>
<div class="band" style="top:175px"><b style="letter-spacing:-0.42px">Materials and Finishes</b><svg width="7" height="10" viewBox="0 0 7 10" class="chev"><path d="M1.2 4.6 L3.5 2.3 L5.8 4.6 M1.2 8.2 L3.5 5.9 L5.8 8.2" fill="none" stroke="#000" stroke-width="1.6"/></svg></div>
<div class="row" style="top:194px"><div class="c1">Base (default)</div><div class="c2">Gypsum Wall Board</div><div class="c3">=</div><div class="c4"></div><i class="v1"></i><i class="v2"></i><i class="v3"></i><i class="v4"></i></div>
<div class="row" style="top:212px"><div class="c1">Door (default)</div><div class="c2">Birch</div><div class="c3">=</div><div class="c4"></div><i class="v1"></i><i class="v2"></i><i class="v3"></i><i class="v4"></i></div>
<div class="row" style="top:230px"><div class="c1">Door Handle (default)</div><div class="c2">Aluminum</div><div class="c3">=</div><div class="c4"></div><i class="v1"></i><i class="v2"></i><i class="v3"></i><i class="v4"></i></div>
<div class="row" style="top:248px"><div class="c1">Forging (default)</div><div class="c2"><span class="sel">Aluminum</span><span class="dots3"></span></div><div class="c3">=</div><div class="c4"></div><i class="v1"></i><i class="v2"></i><i class="v3"></i><i class="v4"></i></div>
<div class="row" style="top:266px"><div class="c1">Hanger (default)</div><div class="c2">Birch</div><div class="c3">=</div><div class="c4"></div><i class="v1"></i><i class="v2"></i><i class="v3"></i><i class="v4"></i></div>
<div class="band" style="top:287px"><b style="letter-spacing:-0.48px">Dimensions</b><svg width="7" height="10" viewBox="0 0 7 10" class="chev"><path d="M1.2 4.6 L3.5 2.3 L5.8 4.6 M1.2 8.2 L3.5 5.9 L5.8 8.2" fill="none" stroke="#000" stroke-width="1.6"/></svg></div>
<div class="row" style="top:306px"><div class="c1">D</div><div class="c2">1000.0</div><div class="c3">=</div><div class="c4"><span class="cb lk"><svg width="13" height="13" viewBox="0 0 13 13" style="position:absolute;left:0;top:0"><rect x="0.5" y="0.5" width="12" height="12" fill="#fff" stroke="#333"/></svg></span></div><i class="v1"></i><i class="v2"></i><i class="v3"></i><i class="v4"></i></div>
<div class="row" style="top:324px"><div class="c1">H</div><div class="c2">2200.0</div><div class="c3">=</div><div class="c4"><span class="cb lk"><svg width="13" height="13" viewBox="0 0 13 13" style="position:absolute;left:0;top:0"><rect x="0.5" y="0.5" width="12" height="12" fill="#fff" stroke="#333"/></svg></span></div><i class="v1"></i><i class="v2"></i><i class="v3"></i><i class="v4"></i></div>
<div class="row" style="top:342px"><div class="c1">W</div><div class="c2">1000.0</div><div class="c3">=</div><div class="c4"><span class="cb lk"><svg width="13" height="13" viewBox="0 0 13 13" style="position:absolute;left:0;top:0"><rect x="0.5" y="0.5" width="12" height="12" fill="#fff" stroke="#333"/></svg></span></div><i class="v1"></i><i class="v2"></i><i class="v3"></i><i class="v4"></i></div>
<div class="row" style="top:360px"><div class="c1">Angle of Door (0°=closed)</div><div class="c2">90.00°</div><div class="c3">=</div><div class="c4"><span class="cb lk"><svg width="13" height="13" viewBox="0 0 13 13" style="position:absolute;left:0;top:0"><rect x="0.5" y="0.5" width="12" height="12" fill="#fff" stroke="#333"/></svg></span></div><i class="v1"></i><i class="v2"></i><i class="v3"></i><i class="v4"></i></div>
<div class="row" style="top:378px"><div class="c1">H from Bottom - Hangers</div><div class="c2">2000.0</div><div class="c3">=</div><div class="c4"><span class="cb lk"><svg width="13" height="13" viewBox="0 0 13 13" style="position:absolute;left:0;top:0"><rect x="0.5" y="0.5" width="12" height="12" fill="#fff" stroke="#333"/></svg></span></div><i class="v1"></i><i class="v2"></i><i class="v3"></i><i class="v4"></i></div>
<div class="row" style="top:396px"><div class="c1">H from Bottom - Plate</div><div class="c2">1200.0</div><div class="c3">=</div><div class="c4"><span class="cb lk"><svg width="13" height="13" viewBox="0 0 13 13" style="position:absolute;left:0;top:0"><rect x="0.5" y="0.5" width="12" height="12" fill="#fff" stroke="#333"/></svg></span></div><i class="v1"></i><i class="v2"></i><i class="v3"></i><i class="v4"></i></div>
<div class="row" style="top:414px"><div class="c1">H of Door Handle</div><div class="c2">250.0</div><div class="c3">=</div><div class="c4"><span class="cb lk"><svg width="13" height="13" viewBox="0 0 13 13" style="position:absolute;left:0;top:0"><rect x="0.5" y="0.5" width="12" height="12" fill="#fff" stroke="#333"/></svg></span></div><i class="v1"></i><i class="v2"></i><i class="v3"></i><i class="v4"></i></div>
<div class="band" style="top:435px"><b style="letter-spacing:-0.8px">Phasing</b><svg width="7" height="10" viewBox="0 0 7 10" class="chev"><path d="M1.2 4.6 L3.5 2.3 L5.8 4.6 M1.2 8.2 L3.5 5.9 L5.8 8.2" fill="none" stroke="#000" stroke-width="1.6"/></svg></div>
<div class="row" style="top:454px"><div class="c1">Number of Drawers</div><div class="c2">4</div><div class="c3">=</div><div class="c4"><span class="cb lk"><svg width="13" height="13" viewBox="0 0 13 13" style="position:absolute;left:0;top:0"><rect x="0.5" y="0.5" width="12" height="12" fill="#fff" stroke="#333"/></svg></span></div><i class="v1"></i><i class="v2"></i><i class="v3"></i><i class="v4"></i></div>
<div class="row" style="top:472px"><div class="c1">Number of Hanger 1</div><div class="c2">4</div><div class="c3">=</div><div class="c4"><span class="cb lk"><svg width="13" height="13" viewBox="0 0 13 13" style="position:absolute;left:0;top:0"><rect x="0.5" y="0.5" width="12" height="12" fill="#fff" stroke="#333"/></svg></span></div><i class="v1"></i><i class="v2"></i><i class="v3"></i><i class="v4"></i></div>
<div class="row" style="top:490px"><div class="c1">Number of Hanger 2</div><div class="c2">6</div><div class="c3">=</div><div class="c4"><span class="cb lk"><svg width="13" height="13" viewBox="0 0 13 13" style="position:absolute;left:0;top:0"><rect x="0.5" y="0.5" width="12" height="12" fill="#fff" stroke="#333"/></svg></span></div><i class="v1"></i><i class="v2"></i><i class="v3"></i><i class="v4"></i></div>
<div class="band" style="top:511px"><b style="letter-spacing:-0.15px">Data</b><svg width="7" height="10" viewBox="0 0 7 10" class="chev"><path d="M1.2 4.6 L3.5 2.3 L5.8 4.6 M1.2 8.2 L3.5 5.9 L5.8 8.2" fill="none" stroke="#000" stroke-width="1.6"/></svg></div>
<div class="row gray" style="top:530px"><div class="c1">Drawer 1 Multiple pieces</div><div class="c2"><span class="cb"><svg width="13" height="13" viewBox="0 0 13 13" style="position:absolute;left:0;top:0"><rect x="0.5" y="0.5" width="12" height="12" fill="#fff" stroke="#c8c8c8"/><path d="M2.5 6.5 L5 9.5 L10.5 3" fill="none" stroke="#bbb" stroke-width="1.3"/></svg></span></div><div class="c3">= Number of Drawers &gt; 1</div><div class="c4"></div><i class="v1"></i><i class="v2"></i><i class="v3"></i><i class="v4"></i></div>
<div class="row gray" style="top:548px"><div class="c1">Drawer 1 One piece</div><div class="c2"><span class="cb"><svg width="13" height="13" viewBox="0 0 13 13" style="position:absolute;left:0;top:0"><rect x="0.5" y="0.5" width="12" height="12" fill="#fff" stroke="#c8c8c8"/></svg></span></div><div class="c3">= if(Number of Drawers = 1, 1 = 1, 0 = 1)</div><div class="c4"></div><i class="v1"></i><i class="v2"></i><i class="v3"></i><i class="v4"></i></div>
<div class="row gray" style="top:566px"><div class="c1">H data Drawers</div><div class="c2">1200.0</div><div class="c3">= if([H from Bottom - Plate] &gt; H, H - 50 mm, [H from Bottom - Plate])</div><div class="c4"><span class="cb lk"><svg width="13" height="13" viewBox="0 0 13 13" style="position:absolute;left:0;top:0"><rect x="0.5" y="0.5" width="12" height="12" fill="#fff" stroke="#333"/></svg></span></div><i class="v1"></i><i class="v2"></i><i class="v3"></i><i class="v4"></i></div>
<div class="row gray" style="top:584px"><div class="c1">H data Hangers</div><div class="c2">2000.0</div><div class="c3">= if([H from Bottom - Hangers] &gt; H, H - 50 mm, [H from Bottom - Han</div><div class="c4"><span class="cb lk"><svg width="13" height="13" viewBox="0 0 13 13" style="position:absolute;left:0;top:0"><rect x="0.5" y="0.5" width="12" height="12" fill="#fff" stroke="#333"/></svg></span></div><i class="v1"></i><i class="v2"></i><i class="v3"></i><i class="v4"></i></div>
<div class="row" style="top:602px"><div class="c1">H of Door data</div><div class="c2">2175.0</div><div class="c3">= H - 25 mm</div><div class="c4"><span class="cb lk"><svg width="13" height="13" viewBox="0 0 13 13" style="position:absolute;left:0;top:0"><rect x="0.5" y="0.5" width="12" height="12" fill="#fff" stroke="#333"/></svg></span></div><i class="v1"></i><i class="v2"></i><i class="v3"></i><i class="v4"></i></div>
<div class="row gray" style="top:620px"><div class="c1">H of Drawer</div><div class="c2">253.8</div><div class="c3">= ([H from Bottom - Plate] - 25 mm - (Number of Drawers * 25 mm) - 60 mm) / Number of Drawers</div><div class="c4"><span class="cb lk"><svg width="13" height="13" viewBox="0 0 13 13" style="position:absolute;left:0;top:0"><rect x="0.5" y="0.5" width="12" height="12" fill="#fff" stroke="#333"/></svg></span></div><i class="v1"></i><i class="v2"></i><i class="v3"></i><i class="v4"></i></div>
<div class="row gray" style="top:638px"><div class="c1">H of drawer /2</div><div class="c2">151.9</div><div class="c3">= H of Drawer / 2 + 25 mm</div><div class="c4"><span class="cb lk"><svg width="13" height="13" viewBox="0 0 13 13" style="position:absolute;left:0;top:0"><rect x="0.5" y="0.5" width="12" height="12" fill="#fff" stroke="#333"/></svg></span></div><i class="v1"></i><i class="v2"></i><i class="v3"></i><i class="v4"></i></div>
<div class="row gray" style="top:656px"><div class="c1">H of drawer inside</div><div class="c2">228.8</div><div class="c3">= H of Drawer - 25 mm</div><div class="c4"><span class="cb lk"><svg width="13" height="13" viewBox="0 0 13 13" style="position:absolute;left:0;top:0"><rect x="0.5" y="0.5" width="12" height="12" fill="#fff" stroke="#333"/></svg></span></div><i class="v1"></i><i class="v2"></i><i class="v3"></i><i class="v4"></i></div>
<div class="row gray" style="top:674px"><div class="c1">Number of Drawers&nbsp; formula</div><div class="c2">4</div><div class="c3">= if(Number of Drawers &lt; 2, 2, Number of Drawers)</div><div class="c4"><span class="cb lk"><svg width="13" height="13" viewBox="0 0 13 13" style="position:absolute;left:0;top:0"><rect x="0.5" y="0.5" width="12" height="12" fill="#fff" stroke="#333"/></svg></span></div><i class="v1"></i><i class="v2"></i><i class="v3"></i><i class="v4"></i></div>
<div class="row gray" style="top:692px"><div class="c1">Number of Hanger 1 - formula</div><div class="c2">4</div><div class="c3">= if(Number of Hanger 1 &lt; 2, 2, Number of Hanger 1)</div><div class="c4"><span class="cb lk"><svg width="13" height="13" viewBox="0 0 13 13" style="position:absolute;left:0;top:0"><rect x="0.5" y="0.5" width="12" height="12" fill="#fff" stroke="#333"/></svg></span></div><i class="v1"></i><i class="v2"></i><i class="v3"></i><i class="v4"></i></div>
<div class="row gray" style="top:710px"><div class="c1">Number of Hanger 2 - formula</div><div class="c2">6</div><div class="c3">= if(Number of Hanger 2 &lt; 2, 2, Number of Hanger 2)</div><div class="c4"><span class="cb lk"><svg width="13" height="13" viewBox="0 0 13 13" style="position:absolute;left:0;top:0"><rect x="0.5" y="0.5" width="12" height="12" fill="#fff" stroke="#333"/></svg></span></div><i class="v1"></i><i class="v2"></i><i class="v3"></i><i class="v4"></i></div>
<div class="row" style="top:728px"><div class="c1">W Door data</div><div class="c2">995.0</div><div class="c3">= W - 5 mm</div><div class="c4"><span class="cb lk"><svg width="13" height="13" viewBox="0 0 13 13" style="position:absolute;left:0;top:0"><rect x="0.5" y="0.5" width="12" height="12" fill="#fff" stroke="#333"/></svg></span></div><i class="v1"></i><i class="v2"></i><i class="v3"></i><i class="v4"></i></div>
<div class="row" style="top:746px"><div class="c1">W data 2</div><div class="c2">500.0</div><div class="c3">= W / 2</div><div class="c4"><span class="cb lk"><svg width="13" height="13" viewBox="0 0 13 13" style="position:absolute;left:0;top:0"><rect x="0.5" y="0.5" width="12" height="12" fill="#fff" stroke="#333"/></svg></span></div><i class="v1"></i><i class="v2"></i><i class="v3"></i><i class="v4"></i></div>
<div class="band" style="top:767px"><b style="letter-spacing:-0.35px">Visibility</b><svg width="7" height="10" viewBox="0 0 7 10" class="chev"><path d="M1.2 4.6 L3.5 2.3 L5.8 4.6 M1.2 8.2 L3.5 5.9 L5.8 8.2" fill="none" stroke="#000" stroke-width="1.6"/></svg></div>
<div class="row" style="top:786px"><div class="c1">Door Hande from Left</div><div class="c2"><span class="cb"><svg width="13" height="13" viewBox="0 0 13 13" style="position:absolute;left:0;top:0"><rect x="0.5" y="0.5" width="12" height="12" fill="#fff" stroke="#333"/></svg></span></div><div class="c3">=</div><div class="c4"></div><i class="v1"></i><i class="v2"></i><i class="v3"></i><i class="v4"></i></div>
<div class="row" style="top:804px"><div class="c1">Door Handle from Right</div><div class="c2"><span class="cb"><svg width="13" height="13" viewBox="0 0 13 13" style="position:absolute;left:0;top:0"><rect x="0.5" y="0.5" width="12" height="12" fill="#fff" stroke="#333"/><path d="M2.5 6.5 L5 9.5 L10.5 3" fill="none" stroke="#333" stroke-width="1.3"/></svg></span></div><div class="c3">=</div><div class="c4"></div><i class="v1"></i><i class="v2"></i><i class="v3"></i><i class="v4"></i></div>
<div class="row" style="top:822px"><div class="c1">Door opening from LEFT</div><div class="c2"><span class="cb"><svg width="13" height="13" viewBox="0 0 13 13" style="position:absolute;left:0;top:0"><rect x="0.5" y="0.5" width="12" height="12" fill="#fff" stroke="#333"/></svg></span></div><div class="c3">=</div><div class="c4"></div><i class="v1"></i><i class="v2"></i><i class="v3"></i><i class="v4"></i></div>
<div class="row" style="top:840px"><div class="c1">Door opening from Right</div><div class="c2"><span class="cb"><svg width="13" height="13" viewBox="0 0 13 13" style="position:absolute;left:0;top:0"><rect x="0.5" y="0.5" width="12" height="12" fill="#fff" stroke="#333"/><path d="M2.5 6.5 L5 9.5 L10.5 3" fill="none" stroke="#333" stroke-width="1.3"/></svg></span></div><div class="c3">=</div><div class="c4"></div><i class="v1"></i><i class="v2"></i><i class="v3"></i><i class="v4"></i></div>
<div class="row" style="top:858px"><div class="c1">Hangers</div><div class="c2"><span class="cb"><svg width="13" height="13" viewBox="0 0 13 13" style="position:absolute;left:0;top:0"><rect x="0.5" y="0.5" width="12" height="12" fill="#fff" stroke="#333"/><path d="M2.5 6.5 L5 9.5 L10.5 3" fill="none" stroke="#333" stroke-width="1.3"/></svg></span></div><div class="c3">=</div><div class="c4"></div><i class="v1"></i><i class="v2"></i><i class="v3"></i><i class="v4"></i></div>
<div class="row" style="top:876px"><div class="c1">Plate</div><div class="c2"><span class="cb"><svg width="13" height="13" viewBox="0 0 13 13" style="position:absolute;left:0;top:0"><rect x="0.5" y="0.5" width="12" height="12" fill="#fff" stroke="#333"/><path d="M2.5 6.5 L5 9.5 L10.5 3" fill="none" stroke="#333" stroke-width="1.3"/></svg></span></div><div class="c3">=</div><div class="c4"></div><i class="v1"></i><i class="v2"></i><i class="v3"></i><i class="v4"></i></div>
<div class="band" style="top:897px"><b style="letter-spacing:0.1px">Other</b><svg width="7" height="10" viewBox="0 0 7 10" class="chev"><path d="M1.2 4.6 L3.5 2.3 L5.8 4.6 M1.2 8.2 L3.5 5.9 L5.8 8.2" fill="none" stroke="#000" stroke-width="1.6"/></svg></div>
<div class="row" style="top:916px"><div class="c1">W Drawer</div><div class="c2">950.0</div><div class="c3">= W - 50 mm</div><div class="c4"><span class="cb lk"><svg width="13" height="13" viewBox="0 0 13 13" style="position:absolute;left:0;top:0"><rect x="0.5" y="0.5" width="12" height="12" fill="#fff" stroke="#333"/></svg></span></div><i class="v1"></i><i class="v2"></i><i class="v3"></i><i class="v4"></i></div>
<div class="row" style="top:934px"><div class="c1">D Drawer</div><div class="c2">970.0</div><div class="c3">= D - 30 mm</div><div class="c4"><span class="cb lk"><svg width="13" height="13" viewBox="0 0 13 13" style="position:absolute;left:0;top:0"><rect x="0.5" y="0.5" width="12" height="12" fill="#fff" stroke="#333"/></svg></span></div><i class="v1"></i><i class="v2"></i><i class="v3"></i><i class="v4"></i></div>
<div class="row" style="top:952px"><div class="c1">W Hanger</div><div class="c2">950.0</div><div class="c3">= W - 50 mm</div><div class="c4"><span class="cb lk"><svg width="13" height="13" viewBox="0 0 13 13" style="position:absolute;left:0;top:0"><rect x="0.5" y="0.5" width="12" height="12" fill="#fff" stroke="#333"/></svg></span></div><i class="v1"></i><i class="v2"></i><i class="v3"></i><i class="v4"></i></div>
<div class="band" style="top:973px"><b style="letter-spacing:0.05px">Identity Data</b><svg width="7" height="10" viewBox="0 0 7 10" class="chev"><path d="M1.2 1.6 L3.5 3.9 L5.8 1.6 M1.2 5.2 L3.5 7.5 L5.8 5.2" fill="none" stroke="#000" stroke-width="1.6"/></svg></div>
<div class="row empty" style="top:992px;height:65px"><i class="v1"></i><i class="v2"></i><i class="v3"></i><i class="v4"></i></div>
<div class="btn" style="left:1510px;top:1070px;width:124px;height:22px;line-height:20px;">Manage Lookup Tables</div>
<div class="btn" style="left:1390px;top:1106px;width:76px;height:22px;line-height:18px;border:2px solid #2a6cb0;background:#e3e7eb;">OK</div>
<div class="btn" style="left:1474px;top:1106px;width:76px;height:22px;line-height:20px;">Cancel</div>
<div class="btn" style="left:1558px;top:1106px;width:76px;height:22px;line-height:20px;">Apply</div>
<div class="t" style="left:839px;top:1105px;font-size:11px;color:#22587e;text-decoration:underline;">How do I manage family types?</div>
</body></html>
